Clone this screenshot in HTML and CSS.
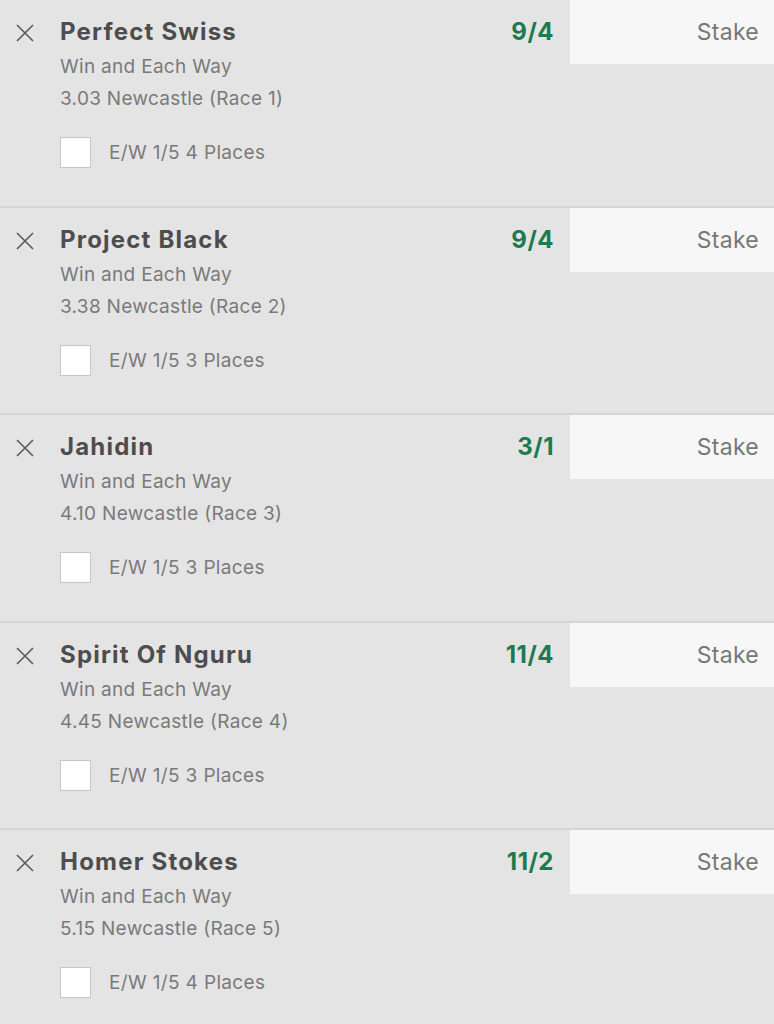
FILE: index.html
```html
<!DOCTYPE html>
<html>
<head>
<meta charset="utf-8">
<link rel="stylesheet" href="styles.css">
</head>
<body>
<div class="slip">
  <div class="bet">
    <div class="close"><svg width="18" height="18" viewBox="0 0 18 18"><path d="M1 1 L17 17 M17 1 L1 17" stroke="#5a5a5a" stroke-width="1.6" fill="none"/></svg></div>
    <div class="info">
      <div class="name">Perfect Swiss</div>
      <div class="sub">Win and Each Way</div>
      <div class="sub">3.03 Newcastle (Race 1)</div>
      <div class="ew"><span class="box"></span><span class="ewtext">E/W 1/5 4 Places</span></div>
    </div>
    <div class="odds">9/4</div>
    <div class="stake">Stake</div>
  </div>
  <div class="bet">
    <div class="close"><svg width="18" height="18" viewBox="0 0 18 18"><path d="M1 1 L17 17 M17 1 L1 17" stroke="#5a5a5a" stroke-width="1.6" fill="none"/></svg></div>
    <div class="info">
      <div class="name">Project Black</div>
      <div class="sub">Win and Each Way</div>
      <div class="sub">3.38 Newcastle (Race 2)</div>
      <div class="ew"><span class="box"></span><span class="ewtext">E/W 1/5 3 Places</span></div>
    </div>
    <div class="odds">9/4</div>
    <div class="stake">Stake</div>
  </div>
  <div class="bet">
    <div class="close"><svg width="18" height="18" viewBox="0 0 18 18"><path d="M1 1 L17 17 M17 1 L1 17" stroke="#5a5a5a" stroke-width="1.6" fill="none"/></svg></div>
    <div class="info">
      <div class="name">Jahidin</div>
      <div class="sub">Win and Each Way</div>
      <div class="sub">4.10 Newcastle (Race 3)</div>
      <div class="ew"><span class="box"></span><span class="ewtext">E/W 1/5 3 Places</span></div>
    </div>
    <div class="odds">3/1</div>
    <div class="stake">Stake</div>
  </div>
  <div class="bet">
    <div class="close"><svg width="18" height="18" viewBox="0 0 18 18"><path d="M1 1 L17 17 M17 1 L1 17" stroke="#5a5a5a" stroke-width="1.6" fill="none"/></svg></div>
    <div class="info">
      <div class="name">Spirit Of Nguru</div>
      <div class="sub">Win and Each Way</div>
      <div class="sub">4.45 Newcastle (Race 4)</div>
      <div class="ew"><span class="box"></span><span class="ewtext">E/W 1/5 3 Places</span></div>
    </div>
    <div class="odds">11/4</div>
    <div class="stake">Stake</div>
  </div>
  <div class="bet">
    <div class="close"><svg width="18" height="18" viewBox="0 0 18 18"><path d="M1 1 L17 17 M17 1 L1 17" stroke="#5a5a5a" stroke-width="1.6" fill="none"/></svg></div>
    <div class="info">
      <div class="name">Homer Stokes</div>
      <div class="sub">Win and Each Way</div>
      <div class="sub">5.15 Newcastle (Race 5)</div>
      <div class="ew"><span class="box"></span><span class="ewtext">E/W 1/5 4 Places</span></div>
    </div>
    <div class="odds">11/2</div>
    <div class="stake">Stake</div>
  </div>
</div>
</body>
</html>
```
FILE: styles.css
```css
html, body {
  margin: 0;
  padding: 0;
  background: #e4e4e4;
}
body {
  font-family: Inter, "Noto Sans", sans-serif;
  width: 774px;
  height: 1024px;
  overflow: hidden;
}
.slip {
  display: flex;
  flex-direction: column;
}
.bet {
  display: flex;
  height: 205.5px;
  border-bottom: 2px solid #d5d5d5;
  background: #e4e4e4;
}
.close {
  padding-left: 16px;
  padding-top: 24px;
  box-sizing: border-box;
  flex: none;
  width: 60px;
}
.close svg {
  display: block;
}
.info {
  flex: 1;
  padding-top: 15px;
}
.name {
  font-size: 24px;
  font-weight: 700;
  color: #4d4d4d;
  line-height: 34px;
  height: 34px;
  letter-spacing: 1.2px;
}
.sub {
  font-size: 19px;
  color: #7a7a7a;
  line-height: 32px;
  letter-spacing: 0.3px;
  margin-top: 2px;
  margin-bottom: -2px;
}
.ew {
  display: flex;
  align-items: center;
  margin-top: 24px;
}
.box {
  width: 29px;
  height: 29px;
  background: #fff;
  border: 1px solid #c6c6c6;
  flex: none;
}
.ewtext {
  margin-left: 18px;
  font-size: 19px;
  letter-spacing: 0.35px;
  color: #7a7a7a;
}
.odds {
  flex: none;
  padding-right: 16px;
  height: 64px;
  line-height: 64px;
  font-size: 24px;
  font-weight: 700;
  letter-spacing: 0.5px;
  color: #1c7a50;
}
.stake {
  flex: none;
  width: 204px;
  height: 64px;
  box-sizing: border-box;
  background: #f7f7f7;
  text-align: right;
  padding-right: 15px;
  line-height: 64px;
  font-size: 23px;
  letter-spacing: 0.3px;
  color: #787878;
}
```
